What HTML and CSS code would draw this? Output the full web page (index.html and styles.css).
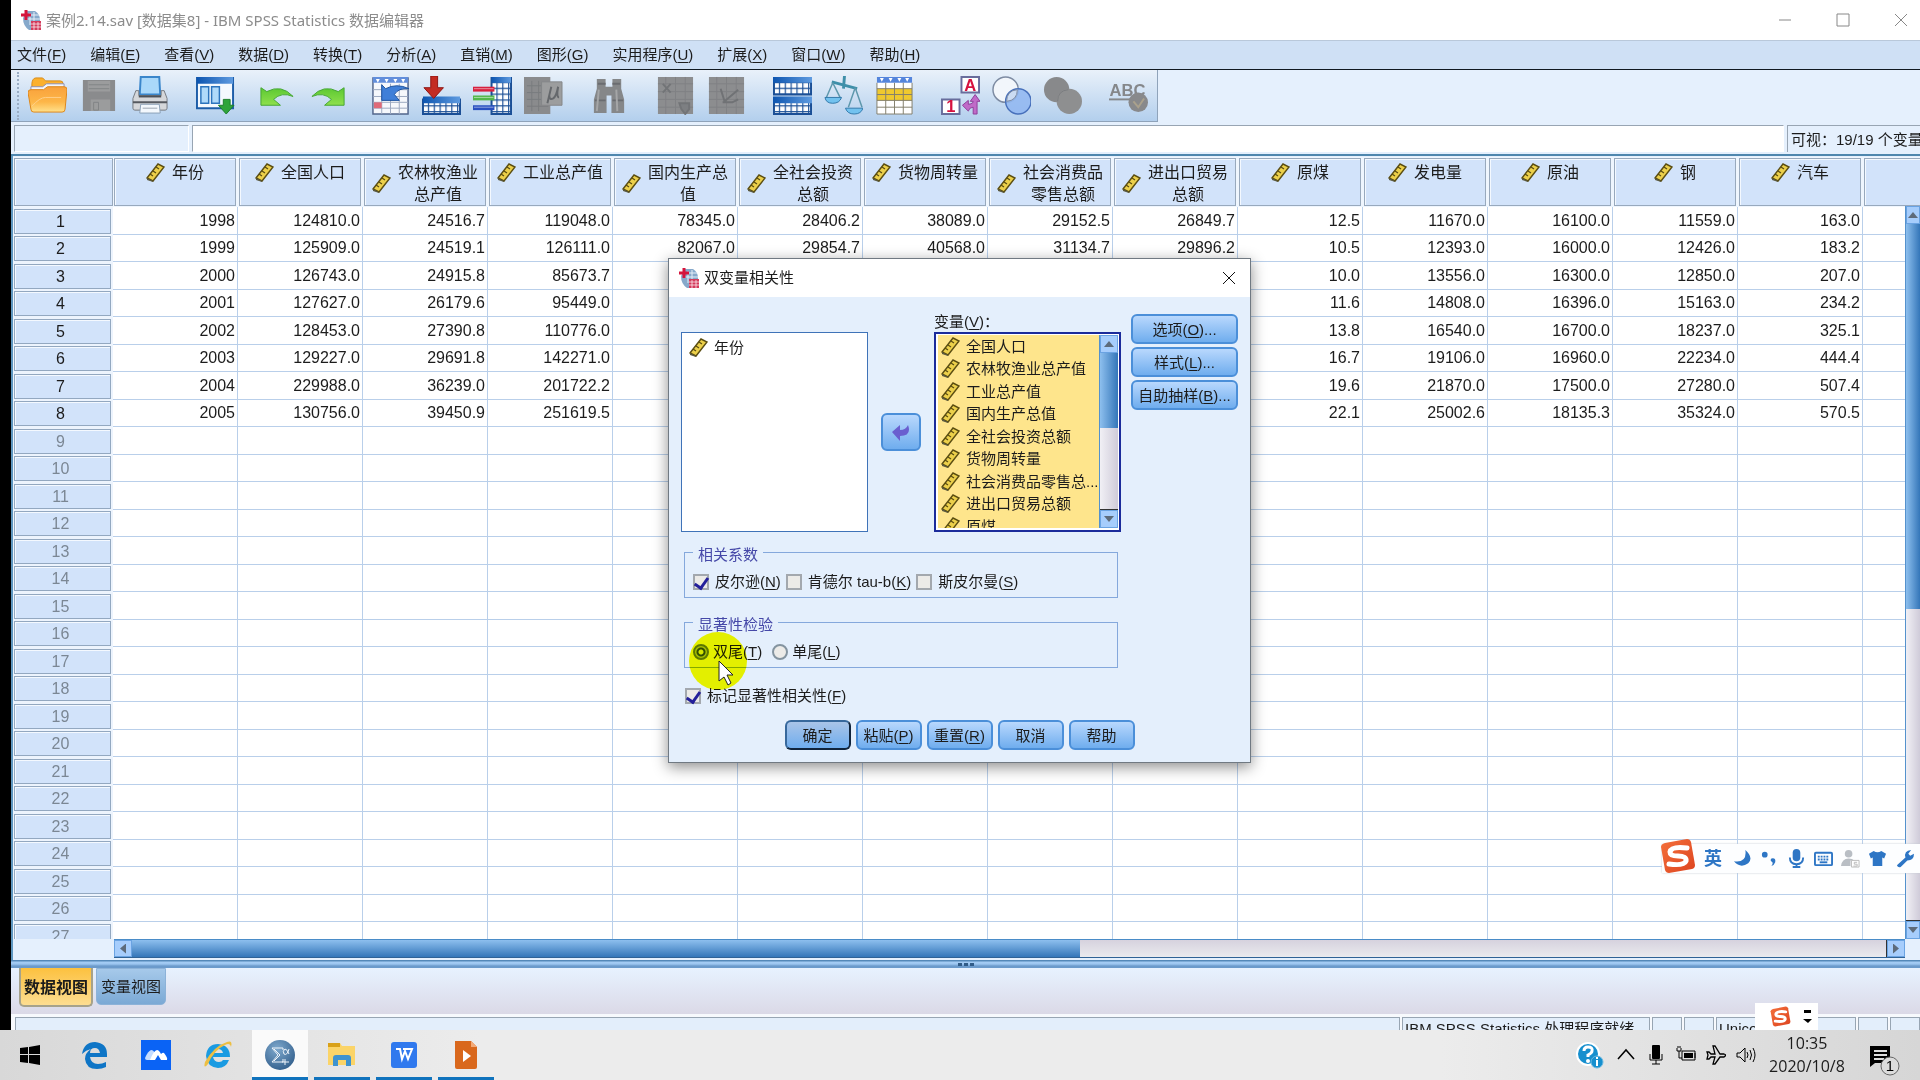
FILE: index.html
```html
<!DOCTYPE html>
<html lang="zh-CN">
<head>
    <meta charset="UTF-8">
    <meta name="viewport" content="width=device-width, initial-scale=1.0">
    <title>案例2.14.sav [数据集8] - IBM SPSS Statistics 数据编辑器</title>
    <link rel="stylesheet" href="styles.css">
</head>
<body>

    <!-- Shared icons -->
    <svg class="sprite" aria-hidden="true">
        <defs>
            <linearGradient id="blueHead" x1="0" y1="0" x2="1" y2="0"><stop offset="0" stop-color="#0d55b0"/><stop offset="1" stop-color="#5f9be0"/></linearGradient>
            <linearGradient id="orange" x1="0" y1="0" x2="0" y2="1"><stop offset="0" stop-color="#f9a13c"/><stop offset=".6" stop-color="#fdb648"/><stop offset="1" stop-color="#ffe18c"/></linearGradient>
            <linearGradient id="green" x1="0" y1="0" x2="0" y2="1"><stop offset="0" stop-color="#5cc832"/><stop offset="1" stop-color="#8fe04c"/></linearGradient>
            <linearGradient id="sogou" x1="0" y1="0" x2="1" y2="1"><stop offset="0" stop-color="#f4703a"/><stop offset="1" stop-color="#dd4420"/></linearGradient>
            <radialGradient id="ball" cx=".4" cy=".3" r=".8"><stop offset="0" stop-color="#7fa9cd"/><stop offset="1" stop-color="#2d5a88"/></radialGradient>
            <pattern id="blueGrid" width="6" height="6" patternUnits="userSpaceOnUse"><rect width="6" height="6" fill="#fff"/><path d="M0 0H6M0 0V6" stroke="#1b4f96" stroke-width="2.400"/></pattern>
        </defs>
        <symbol id="ruler" viewBox="0 0 20 20">
            <path d="M1 15 12 1l6 3L7 18z" fill="#ecd04a" stroke="#5b4e12" stroke-width="1.4"/>
            <path d="m4 11 3 2M7 8l3 2m0-6 3 2" stroke="#5b4e12" stroke-width="1.3"/>
            <path d="m1 15 6 3v1l-6-2z" fill="#5b5a40"/>
        </symbol>
        <symbol id="spss" viewBox="0 0 20 20">
            <path d="M6 1h8q5 3 5 9v10H8Q2 16 2 8z" fill="#86a9cb"/>
            <path d="M6 5h12M5 9h14M9 3v12M13 2v9" stroke="#e5eef8" stroke-width="1"/>
            <path d="M5 0v10M0 5h10" stroke="#d5143c" stroke-width="3"/>
            <rect x="10" y="11" width="10" height="9" fill="#d43a5b"/>
            <path d="M10 14h10M10 17h10M13 12v8m4-8v8" stroke="#fff" stroke-width=".7"/>
        </symbol>
        <symbol id="sogouLogo" viewBox="0 0 36 36">
            <path d="M5 5 27 1q3 0 4 3l4 23q0 3-3 4L9 35q-3 0-4-3L1 9q0-3 4-4z" fill="url(#sogou)"/>
            <path d="M27 10Q11 8 10 14q0 4 8 4 9 0 8 5-2 5-17 3" fill="none" stroke="#fff" stroke-width="5" stroke-linecap="round"/>
        </symbol>
    </svg>

    <main class="window">
        <header class="titlebar">
            <svg class="app-icon"><use href="#spss"/></svg>
            <h1>案例2.14.sav [数据集8] - IBM SPSS Statistics 数据编辑器</h1>
            <div class="window-buttons">
                <button aria-label="最小化"><svg viewBox="0 0 14 14"><path d="M1 7h12"/></svg></button>
                <button aria-label="最大化"><svg viewBox="0 0 14 14"><path d="M1 1h12v12H1z"/></svg></button>
                <button aria-label="关闭"><svg viewBox="0 0 14 14"><path d="m1 1 12 12M13 1 1 13"/></svg></button>
            </div>
        </header>

        <nav class="menubar">
            <button>文件(<u>F</u>)</button>
            <button>编辑(<u>E</u>)</button>
            <button>查看(<u>V</u>)</button>
            <button>数据(<u>D</u>)</button>
            <button>转换(<u>T</u>)</button>
            <button>分析(<u>A</u>)</button>
            <button>直销(<u>M</u>)</button>
            <button>图形(<u>G</u>)</button>
            <button>实用程序(<u>U</u>)</button>
            <button>扩展(<u>X</u>)</button>
            <button>窗口(<u>W</u>)</button>
            <button>帮助(<u>H</u>)</button>
        </nav>

        <div class="toolbar-row">
            <div class="toolbar">
                <div class="group">
                    <button aria-label="打开"><svg viewBox="0 0 40 40"><path d="M4 8q0-2 1-4 1-2 3-2h7l3 3h15q3 0 3 3v8H4z" fill="#fbb02e" stroke="#d98a14"/><path d="M3 11h12l4-3h18v10H3z" fill="#f4f6fa" stroke="#8d8fb0"/><path d="M0 17q0-3 3-3h13l4-3h17q3 0 3 3l-2 20q0 3-3 3H6q-3 0-3-3z" fill="url(#orange)" stroke="#dd8618"/><path d="M4 31q8-9 14-9h16" fill="none" stroke="#ffd08a"/></svg></button>
                    <button aria-label="保存" disabled><svg viewBox="0 0 40 40"><path d="M4 4h33v32H4z" fill="#8a8b8d"/><path d="M9 5h23v11H9zM12 24h20v12H12z" fill="#9b9c9d"/><path d="M10 9h21M10 13h21M15 27h5v8h-5z" stroke="#828486" fill="none"/></svg></button>
                    <button aria-label="打印"><svg viewBox="0 0 40 40"><path d="M11 1h19l1 18H10z" fill="#a9d8fa" stroke="#3a86cb" stroke-width="2"/><path d="M6 15h3v5h23v-5h3l3 8v10q0 2-2 2H5q-2 0-2-2V23z" fill="#d5d7da" stroke="#75797f"/><path d="M9 20h23v2H9z" fill="#4a5058"/><path d="M3 27h35" stroke="#55595f" stroke-width="2"/><path d="M11 29h19l1 9H10z" fill="#f3f8fd" stroke="#8a9fb6"/><path d="M13 33h15" stroke="#9aa4b0"/></svg></button>
                </div>
                <div class="group">
                    <button aria-label="重新调用对话框"><svg viewBox="0 0 40 40"><path d="M1 2h37v31H1z" fill="#f4f9fe" stroke="#1d5da8" stroke-width="2"/><path d="M1 1h37v7H1z" fill="url(#blueHead)"/><path d="M5 11h8v17H5zM16 11h8v17h-8z" fill="#b0dafa" stroke="#2c74bd" stroke-width="1.500"/><path d="M28 24h7v6h4l-8 9-8-9h5z" fill="#2fa43a" stroke="#1d7d2c"/></svg></button>
                </div>
                <div class="group tight">
                    <button aria-label="撤销"><svg viewBox="0 0 40 40"><path d="m3 12 6 4q15-8 27 5-12-5-20 3l7 6H3z" fill="url(#green)" stroke="#45a732"/></svg></button>
                    <button aria-label="重做"><svg viewBox="0 0 40 40"><path d="m36 12-6 4Q15 8 3 21q12-5 20 3l-7 6h20z" fill="url(#green)" stroke="#45a732"/></svg></button>
                </div>
                <div class="group tight">
                    <button aria-label="转到个案"><svg viewBox="0 0 40 40"><path d="M2 2h36v37H2z" fill="#f6f8fc" stroke="#52658c" stroke-width="1.500"/><path d="M2 1h36v6H2z" fill="#628edb"/><path d="m5 3 2 4 2-4m5 0 2 4 2-4m5 0 2 4 2-4m4 0 2 4 2-4" fill="#fff"/><path d="M2 14h36M2 21h36M2 27h36M2 33h36M11 8v31m9-31v31m9-31v31" stroke="#9ba8bf"/><path d="M3 27h8v6H3z" fill="#df6a78"/><path d="m11 9 4 4q11-6 24 0-11-1-15 6l5 6H11z" fill="#3f7fd8" stroke="#1d529e"/></svg></button>
                    <button aria-label="转到变量"><svg viewBox="0 0 40 40"><path d="M1 24h38v15H1z" fill="url(#blueGrid)" stroke="#1b4f96" stroke-width="2"/><path d="M1 21h38v7H1z" fill="url(#blueHead)"/><path d="M9 0h7v12h6L12 23 2 12h7z" fill="#c32b22" stroke="#8e1512"/></svg></button>
                    <button aria-label="变量"><svg viewBox="0 0 40 40"><path d="M19 2h20v37H19z" fill="url(#blueGrid)" stroke="#1b4f96" stroke-width="2"/><path d="M19 1h20v6H19z" fill="url(#blueHead)"/><path d="M0 11h22v5H0z" fill="#d7203f"/><path d="M0 20h22v5H0z" fill="#53b64b"/><path d="M0 30h22v5H0z" fill="#294fc0"/><path d="M1 13h20M1 22h20M1 32h20" stroke="#fff" stroke-opacity=".5"/></svg></button>
                    <button aria-label="运行描述统计" disabled><svg viewBox="0 0 40 40"><path d="M0 1h27v38H0z" fill="#8a8b8d"/><path d="M3 10h22M3 17h22M3 24h22M3 31h22M8 5v31m7-31v31" stroke="#797b7e"/><path d="M18 6h21v24H18z" fill="#9c9d9e" stroke="#858789"/><path d="m24 28 4-17m-2 9q0 5 4 3 3-2 5-12-2 11 1 11" stroke="#65686c" stroke-width="2" fill="none"/></svg></button>
                </div>
                <div class="group">
                    <button aria-label="查找" disabled><svg viewBox="0 0 40 40"><path d="M7 3h9v8h7V3h9v10l3 11v14H22V20h-5v18H4V24l3-11z" fill="#858789"/><path d="M8 8h8m7 0h8M5 25h11m7 0h11" stroke="#6a6c70" stroke-width="2"/><path d="M9 14 7 36m20-22 1 22" stroke="#a5a6a7" stroke-width="2"/></svg></button>
                </div>
                <div class="group">
                    <button aria-label="插入个案" disabled><svg viewBox="0 0 40 40"><path d="M2 1h36v38H2z" fill="#8c8d8f"/><path d="M2 8h36M2 16h36M2 24h36M2 32h36M10 1v38m10-38v38m10-38v38" stroke="#7f8184"/><path d="m7 8 8 9m0-9-8 9M24 28h10v6l-4 5-4-5z" stroke="#727477" stroke-width="2" fill="#7d7f82"/></svg></button>
                    <button aria-label="插入变量" disabled><svg viewBox="0 0 40 40"><path d="M2 1h36v38H2z" fill="#8c8d8f"/><path d="M2 8h36M2 16h36M2 24h36M2 32h36M10 1v38m10-38v38m10-38v38" stroke="#7f8184"/><path d="m14 13 4 13 14-12M16 27h10l6-3" stroke="#707275" stroke-width="2" fill="none"/></svg></button>
                </div>
                <div class="group">
                    <button aria-label="拆分文件"><svg viewBox="0 0 40 40"><path d="M1 6h38v13H1zM1 26h38v13H1z" fill="url(#blueGrid)" stroke="#1b4f96" stroke-width="2"/><path d="M0 1h40v6H0zM0 21h40v7H0z" fill="url(#blueHead)"/></svg></button>
                    <button aria-label="个案加权"><svg viewBox="0 0 40 40"><path d="m8 6 26 7M21 0l-1 13" stroke="#3e8fa9" stroke-width="3"/><path d="M9 7 2 23m7-16 8 16M32 12l-7 20m7-20 7 20" stroke="#5d97ac" stroke-width="1.500"/><path d="M1 22h17q-2 6-9 6t-8-6zM22 33h18q-2 6-9 6t-9-6z" fill="#72c2ef" stroke="#3278aa"/></svg></button>
                    <button aria-label="选择个案"><svg viewBox="0 0 40 40"><path d="M2 2h36v37H2z" fill="#fff"/><path d="M2 1h36v6H2z" fill="#5485dc"/><path d="m5 2 2 4 2-4m5 0 2 4 2-4m5 0 2 4 2-4m4 0 2 4 2-4" fill="#fff"/><path d="M2 13h36v12H2z" fill="#efc92e"/><path d="M2 7v32h36V7M2 13h36M2 19h36M2 25h36M2 32h36M11 7v32m9-32v32m9-32v32" stroke="#837e6c" fill="none"/></svg></button>
                </div>
                <div class="group">
                    <button aria-label="值标签"><svg viewBox="0 0 40 40"><path d="M21 1h18v16H21zM1 24h18v15H1z" fill="#fff" stroke="#686d9c" stroke-width="2"/><text class="glyph" x="30" y="15">A</text><text class="glyph" x="10" y="37">1</text><path d="m35 19 5 7h-3v13h-4v-7q-4 0-5 4l-6-6 6-5v4q3 0 5-2v-1h-3z" fill="#c06ac8" stroke="#8e3f99"/></svg></button>
                    <button aria-label="使用变量集"><svg viewBox="0 0 40 40"><circle cx="14" cy="14" r="13" fill="#f2f6fb" stroke="#7d8ba2" stroke-width="1.500"/><circle cx="27" cy="26" r="13" fill="#8fb6f1" fill-opacity=".85" stroke="#4770bb" stroke-width="1.500"/><path d="M15 26q0-11 11-12 0 11-11 12z" fill="#cbdcf3" stroke="#7d8ba2"/></svg></button>
                    <button aria-label="显示所有变量" disabled><svg viewBox="0 0 40 40"><circle cx="14" cy="14" r="13" fill="#88898b"/><circle cx="27" cy="26" r="13" fill="#8e8f90"/><path d="M15 26q0-11 11-12" stroke="#7a7c7f" fill="none"/></svg></button>
                </div>
                <div class="group">
                    <button aria-label="拼写检查" disabled><svg viewBox="0 0 40 40"><text class="glyph abc" x="19" y="20">ABC</text><path d="M0 24h22" stroke="#85888c" stroke-width="2"/><circle cx="30" cy="27" r="10" fill="#88898b"/><path d="m25 26 5 6 6-9" fill="none" stroke="#aaa18c" stroke-width="2"/></svg></button>
                </div>
            </div>
        </div>

        <div class="cell-editor">
            <input class="cell-name" aria-label="单元格" readonly>
            <input class="cell-value" aria-label="单元格内容">
            <div class="visible-count">可视：19/19 个变量</div>
        </div>

        <section class="data-view">
            <div class="grid-area">
                <table class="data-table">
                    <thead><tr id="columnHeads"><th class="corner"><div></div></th></tr></thead>
                    <tbody id="rows"></tbody>
                </table>
                <div class="vscroll">
                    <span class="arrow up"></span>
                    <span class="thumb"></span>
                    <span class="track"></span>
                    <span class="arrow down"></span>
                </div>
            </div>
            <div class="hscroll-row">
                <div class="hscroll">
                    <span class="arrow left"></span>
                    <span class="thumb"></span>
                    <span class="track"></span>
                    <span class="arrow right"></span>
                </div>
            </div>
        </section>

        <div class="splitter"><i></i><i></i><i></i></div>

        <div class="view-tabs">
            <button class="tab active">数据视图</button>
            <button class="tab">变量视图</button>
        </div>

        <footer class="statusbar">
            <div class="status-main"></div>
            <div class="status-processor">IBM SPSS Statistics 处理程序就绪</div>
            <div class="status-small"></div>
            <div class="status-small"></div>
            <div class="status-unicode">Unicode:ON</div>
            <div class="status-small"></div>
            <div class="status-small"></div>
        </footer>
    </main>

    <footer class="taskbar">
        <button class="task start" aria-label="开始"><svg viewBox="0 0 20 20"><path d="m0 3 8-1v7H0zm9-1 11-2v9H9zM0 10h8v8l-8-1zm9 0h11v10L9 18z" fill="#000"/></svg></button>
        <button class="task" aria-label="Edge"><svg viewBox="0 0 30 30"><path d="M3 14Q5 2 16 2q12 1 12 12v3H11q1 7 8 7 4 0 8-2v5q-4 2-9 2Q7 29 6 19q0-6 6-10-5 1-9 5zm8-1h10q-1-5-5-5-5 0-5 5z" fill="#0e75c6"/></svg></button>
        <button class="task" aria-label="腾讯会议"><svg viewBox="0 0 30 30"><path d="M0 0h30v30H0z" fill="#0a63f5"/><path d="M4 18q3-7 6-8 3 0 4 4l-3 6H6q-2 0-2-2z" fill="#c5dcff"/><path d="M9 20q4-10 7-10 2 0 4 4 2-2 3-1 4 5 3 7h-6l-3-5-3 5H9z" fill="#fff"/></svg></button>
        <button class="task" aria-label="Internet Explorer"><svg viewBox="0 0 30 30"><path d="M3 16Q4 4 15 4q12 1 12 13H10q1 5 6 5 3 0 4-2h6q-3 8-11 8Q4 27 3 16zm7-3h10q-1-4-5-4t-5 4z" fill="#1a9be2"/><path d="M5 24q-5 6-3-2Q11 6 24 2q6-2 4 5-1-5-6-2Q11 10 5 24z" fill="#edbf42"/></svg></button>
        <button class="task running current" aria-label="SPSS"><svg viewBox="0 0 30 30"><circle cx="15" cy="15" r="15" fill="url(#ball)"/><path d="M18 10V8H7l6 7-6 7h11v-3m-9 2 6-6-6-6" fill="none" stroke="#eef4fa"/><path d="M24 9q-2 7-5 5-2-3 1-5 2 0 4 5M17 22h7m-4-3v6" fill="none" stroke="#eef4fa"/></svg></button>
        <button class="task running" aria-label="文件资源管理器"><svg viewBox="0 0 30 30"><path d="M1 3h12l2 3h13v19H1z" fill="#fbd468"/><path d="M1 3h12v4H1z" fill="#d9a119"/><path d="M6 26V18q0-3 3-3h12q3 0 3 3v8h-5v-6h-8v6z" fill="#3f93cf"/></svg></button>
        <button class="task running" aria-label="WPS"><svg viewBox="0 0 30 30"><rect x="2" y="2" width="26" height="26" rx="3" fill="#3079ee"/><path d="M7 9h4l2 10 3-8 3 8 4-10H14" fill="none" stroke="#fff" stroke-width="2"/></svg></button>
        <button class="task running" aria-label="播放器"><svg viewBox="0 0 30 30"><path d="M4 1h16l6 6v20q0 2-2 2H6q-2 0-2-2z" fill="#d9681d"/><path d="M20 1v6h6z" fill="#f3aa78"/><path d="m12 10 8 6-8 6z" fill="#fff"/></svg></button>

        <div class="tray">
            <svg class="help" viewBox="0 0 28 28"><circle cx="12" cy="13" r="11" fill="#168fce" stroke="#fff" stroke-width="2"/><path d="M8 10q0-4 4-4 5 0 4 4 0 2-4 4v2" fill="none" stroke="#fff" stroke-width="3"/><circle cx="12" cy="20" r="2" fill="#fff"/><circle cx="21" cy="21" r="6" fill="#168fce" stroke="#6bb9e2"/><path d="M21 19v6m0-9v2" stroke="#fff" stroke-width="2"/></svg>
            <svg viewBox="0 0 20 20"><path d="m2 14 8-9 8 9" fill="none" stroke="#000" stroke-width="1.500"/></svg>
            <svg viewBox="0 0 20 20"><rect x="6" y="0" width="8" height="14" rx="1"/><path d="M4 9v6h12V9m-6 6v4m-4 0h8" fill="none" stroke="#000"/></svg>
            <svg viewBox="0 0 20 20"><path d="M6 6h13v9H6zM19 8v5M1 3v3h4V3M2 1v2m2-2v2M3 6v7h3" fill="none" stroke="#000"/><path d="M8 8h9v5H8z"/></svg>
            <svg viewBox="0 0 20 20"><path d="M1 7h2l2 2h4L7 1h2l5 8h4q3 1 0 3h-4l-5 7H7l2-7H5l-2 2H1l1-4z" fill="none" stroke="#000" stroke-width="1.300"/></svg>
            <svg viewBox="0 0 20 20"><path d="M1 8h3l5-5v14l-5-5H1zM11 7q2 3 0 6m3-8q3 5 0 10m3-12q4 7 0 14" fill="none" stroke="#000"/></svg>
            <div class="clock"><time>10:35</time><span>2020/10/8</span></div>
            <svg class="notice" viewBox="0 0 30 32"><path d="M0 2h20v17H5l-5 4z"/><path d="M4 7h13M4 11h13M4 15h10" stroke="#ddd" stroke-width="2"/><circle cx="20" cy="22" r="9" fill="#dcdcdc" stroke="#666"/><text x="20" y="27">1</text></svg>
        </div>
    </footer>

    <!-- 双变量相关性 -->
    <section class="dialog" role="dialog" aria-labelledby="dialogTitle">
        <header class="dialog-title">
            <svg class="app-icon"><use href="#spss"/></svg>
            <h2 id="dialogTitle">双变量相关性</h2>
            <button aria-label="关闭"><svg viewBox="0 0 14 14"><path d="m1 1 12 12M13 1 1 13"/></svg></button>
        </header>
        <form class="dialog-body">
            <div class="pickers">
                <ul class="listbox source" role="listbox" aria-label="可用变量">
                    <li><svg><use href="#ruler"/></svg>年份</li>
                </ul>
                <div class="mover">
                    <button type="button" aria-label="移动"><svg viewBox="0 0 20 20"><path d="M1 9 9 2v5q6 0 8-5 4 11-8 11v5z" fill="#6a5fcf"/></svg></button>
                </div>
                <div class="target-column">
                    <div class="list-label" id="targetLabel">变量(<u>V</u>)：</div>
                    <div class="listbox target">
                        <ul role="listbox" aria-labelledby="targetLabel">
                            <li><svg><use href="#ruler"/></svg>全国人口</li>
                            <li><svg><use href="#ruler"/></svg>农林牧渔业总产值</li>
                            <li><svg><use href="#ruler"/></svg>工业总产值</li>
                            <li><svg><use href="#ruler"/></svg>国内生产总值</li>
                            <li><svg><use href="#ruler"/></svg>全社会投资总额</li>
                            <li><svg><use href="#ruler"/></svg>货物周转量</li>
                            <li><svg><use href="#ruler"/></svg>社会消费品零售总...</li>
                            <li><svg><use href="#ruler"/></svg>进出口贸易总额</li>
                            <li><svg><use href="#ruler"/></svg>原煤</li>
                        </ul>
                        <div class="vscroll">
                            <span class="arrow up"></span>
                            <span class="thumb"></span>
                            <span class="track"></span>
                            <span class="arrow down"></span>
                        </div>
                    </div>
                </div>
                <div class="side-buttons">
                    <button type="button">选项(<u>O</u>)...</button>
                    <button type="button">样式(<u>L</u>)...</button>
                    <button type="button">自助抽样(<u>B</u>)...</button>
                </div>
            </div>

            <fieldset>
                <legend>相关系数</legend>
                <div class="choices">
                    <label><input type="checkbox" checked><span>皮尔逊(<u>N</u>)</span></label>
                    <label><input type="checkbox"><span>肯德尔 tau-b(<u>K</u>)</span></label>
                    <label><input type="checkbox"><span>斯皮尔曼(<u>S</u>)</span></label>
                </div>
            </fieldset>

            <fieldset>
                <legend>显著性检验</legend>
                <div class="choices radios">
                    <label><input type="radio" name="tails" checked><span>双尾(<u>T</u>)</span></label>
                    <label><input type="radio" name="tails"><span>单尾(<u>L</u>)</span></label>
                </div>
            </fieldset>

            <label class="flag"><input type="checkbox" checked><span>标记显著性相关性(<u>F</u>)</span></label>

            <div class="actions">
                <button type="button" class="default">确定</button>
                <button type="button">粘贴(<u>P</u>)</button>
                <button type="button">重置(<u>R</u>)</button>
                <button type="button">取消</button>
                <button type="button">帮助</button>
            </div>
        </form>
        <div class="click-spot"></div>
        <svg class="pointer" viewBox="0 0 16 26"><path d="M1 1v20l5-4 4 8 3-2-4-8h6z" fill="#fff" stroke="#222"/></svg>
    </section>

    <!-- Input method toolbar -->
    <div class="ime-bar">
        <svg class="ime-logo"><use href="#sogouLogo"/></svg>
        <button class="lang">英</button>
        <button aria-label="半角"><svg viewBox="0 0 20 20"><path d="M13 1q9 8 3 14-8 6-15-2 14 2 12-12z"/></svg></button>
        <button aria-label="标点"><svg viewBox="0 0 20 20"><circle cx="5" cy="6" r="3"/><path d="M12 10q5-1 4 4-1 3-4 4 2-3 1-4-3-2-1-4z"/></svg></button>
        <button aria-label="语音"><svg viewBox="0 0 20 20"><rect x="6" y="0" width="8" height="13" rx="4"/><path d="M3 9q0 7 7 7t7-7m-7 7v3m-4 0h8" fill="none" stroke="#2e76c5" stroke-width="2"/></svg></button>
        <button aria-label="软键盘"><svg viewBox="0 0 20 20"><rect x="1" y="4" width="18" height="13" rx="1" fill="none" stroke="#2e76c5" stroke-width="2"/><path d="M4 8h12M4 11h12" stroke="#2e76c5" stroke-width="2" stroke-dasharray="2 1"/><path d="M6 14h8" stroke="#2e76c5" stroke-width="2"/></svg></button>
        <button aria-label="用户"><svg class="muted" viewBox="0 0 20 20"><circle cx="8" cy="5" r="4"/><path d="M0 18q1-8 8-8 4 0 6 2h-4v6z"/><path d="M11 12h8v7h-8zM17 14h-3v2h3v2h-4" fill="#fff" stroke="#bbb"/></svg></button>
        <button aria-label="皮肤"><svg viewBox="0 0 20 20"><path d="M6 2q4 3 8 0l5 3-2 5-2-1v9H5V9l-2 1-2-5z"/></svg></button>
        <button aria-label="工具"><svg viewBox="0 0 20 20"><path d="M11 9q-2-7 6-8l-3 4 2 2 4-2q0 7-7 7l-7 7q-3 1-4-2z"/></svg></button>
    </div>

    <div class="ime-float">
        <svg class="ime-logo"><use href="#sogouLogo"/></svg>
        <svg class="ime-more" viewBox="0 0 10 14"><path d="M1 0h7v3H1zM0 9h9l-4 4z"/></svg>
    </div>

    <script>
        const columns = ['年份', '全国人口', '农林牧渔业总产值', '工业总产值', '国内生产总值', '全社会投资总额', '货物周转量',
            '社会消费品零售总额', '进出口贸易总额', '原煤', '发电量', '原油', '钢', '汽车', ''];

        const data = [
            ['1998', '124810.0', '24516.7', '119048.0', '78345.0', '28406.2', '38089.0', '29152.5', '26849.7', '12.5', '11670.0', '16100.0', '11559.0', '163.0'],
            ['1999', '125909.0', '24519.1', '126111.0', '82067.0', '29854.7', '40568.0', '31134.7', '29896.2', '10.5', '12393.0', '16000.0', '12426.0', '183.2'],
            ['2000', '126743.0', '24915.8', '85673.7', '', '', '', '', '', '10.0', '13556.0', '16300.0', '12850.0', '207.0'],
            ['2001', '127627.0', '26179.6', '95449.0', '', '', '', '', '', '11.6', '14808.0', '16396.0', '15163.0', '234.2'],
            ['2002', '128453.0', '27390.8', '110776.0', '', '', '', '', '', '13.8', '16540.0', '16700.0', '18237.0', '325.1'],
            ['2003', '129227.0', '29691.8', '142271.0', '', '', '', '', '', '16.7', '19106.0', '16960.0', '22234.0', '444.4'],
            ['2004', '229988.0', '36239.0', '201722.2', '', '', '', '', '', '19.6', '21870.0', '17500.0', '27280.0', '507.4'],
            ['2005', '130756.0', '39450.9', '251619.5', '', '', '', '', '', '22.1', '25002.6', '18135.3', '35324.0', '570.5']
        ];

        const heads = document.getElementById('columnHeads');
        columns.forEach(function(name) {
            const label = name ? '<svg><use href="#ruler"/></svg><span>' + name + '</span>' : '';
            heads.insertAdjacentHTML('beforeend', '<th scope="col"><div><p>' + label + '</p></div></th>');
        });

        const rows = document.getElementById('rows');
        for (let i = 0; i < 27; i++) {
            const values = data[i] || [];
            let html = '<tr class="' + (data[i] ? 'filled' : 'empty') + '"><th scope="row"><div>' + (i + 1) + '</div></th>';
            for (let j = 0; j < columns.length; j++) {
                html += '<td>' + (values[j] || '') + '</td>';
            }
            rows.insertAdjacentHTML('beforeend', html + '</tr>');
        }
    </script>

</body>
</html>
```

FILE: styles.css
```css
* {
    box-sizing: border-box;
}

body {
    margin: 0;
    height: 100vh;
    display: flex;
    flex-direction: column;
    position: relative;
    overflow: hidden;
    background: #000;
    color: #1c1c1c;
    font-family: "Liberation Sans", "Noto Sans CJK SC", sans-serif;
    font-size: 15px;
    line-height: 20px;
}

button, input {
    font: inherit;
    color: inherit;
}

button {
    padding: 0;
    border: 0;
    background: none;
    white-space: nowrap;
}

u {
    text-underline-offset: 2px;
}

h1, h2 {
    margin: 0;
    font-size: 15px;
    font-weight: normal;
}

.sprite {
    position: absolute;
    width: 0;
    height: 0;
}

.window {
    flex: 1;
    min-height: 0;
    margin-left: 11px;
    display: flex;
    flex-direction: column;
    overflow: hidden;
    background: #e5f0fd;
}

/* Title bar */
.titlebar {
    height: 40px;
    flex: none;
    display: flex;
    align-items: center;
    padding-left: 10px;
    background: #fff;
}

.titlebar h1 {
    flex: 1;
    margin-left: 5px;
    color: #8c8c8c;
    font-family: "Noto Sans", "Noto Sans CJK SC", sans-serif;
}

.app-icon {
    width: 20px;
    height: 20px;
}

.window-buttons {
    display: flex;
}

.window-buttons button {
    width: 58px;
    height: 40px;
    padding-top: 4px;
}

.window-buttons button:last-child {
    width: 38px;
    margin-left: 10px;
}

.window-buttons svg, .dialog-title button svg {
    width: 14px;
    height: 14px;
    fill: none;
    stroke: #888;
}

.menubar {
    height: 30px;
    flex: none;
    display: flex;
    align-items: center;
    gap: 24px;
    padding-left: 6px;
    background: #cfe0f5;
    border-top: 1px solid #b9c8da;
    border-bottom: 1px solid #101820;
}

.toolbar-row {
    height: 55px;
    flex: none;
    display: flex;
    align-items: flex-start;
}

.toolbar {
    height: 52px;
    display: flex;
    align-items: center;
    gap: 0 15px;
    padding: 0 3px 0 6px;
    background: linear-gradient(#e9f1fa, #b3cfed);
    border-right: 1px solid #8fa3ba;
    border-bottom: 1px solid #8fa3ba;
}

.toolbar::before {
    content: "";
    width: 0;
    height: 48px;
    margin-right: -12px;
    border-left: 2px dotted #9aadc4;
}

.group {
    display: flex;
}

.group.tight {
    margin-left: -4px;
}

.group button {
    width: 51px;
    height: 48px;
}

.group svg {
    display: block;
    width: 39px;
    height: 39px;
    margin: 0 auto;
}

.glyph {
    font-size: 17px;
    font-weight: bold;
    fill: #d6123f;
    text-anchor: middle;
}

.glyph.abc {
    font-size: 17px;
    fill: #85878a;
}

/* Cell editor */
.cell-editor {
    height: 31px;
    flex: none;
    display: flex;
    gap: 3px;
    padding: 0 0 2px 3px;
    border-bottom: 2px solid #4f87ae;
}

.cell-editor input {
    min-width: 0;
    border: 1px solid #98a5b3;
    border-right-color: #fff;
    border-bottom-color: #fff;
}

.cell-name {
    width: 175px;
    background: #e5f0fd;
}

.cell-value {
    flex: 1;
    background: #fff;
}

.visible-count {
    width: 133px;
    padding: 4px 0 0 3px;
    overflow: hidden;
    white-space: nowrap;
    border-top: 1px solid #98a5b3;
    border-left: 1px solid #98a5b3;
}

/* Data grid */
.data-view {
    flex: 1;
    min-height: 0;
    display: flex;
    flex-direction: column;
    border-left: 2px solid #5f97c0;
}

.grid-area {
    flex: 1;
    min-height: 0;
    display: flex;
    overflow: hidden;
    padding-top: 1px;
}

.data-table {
    width: 1975px;
    flex: none;
    align-self: flex-start;
    margin-right: -83px;
    table-layout: fixed;
    border-collapse: separate;
    border-spacing: 0;
    background: #fff;
}

.data-table th, .data-table td {
    padding: 0;
    font-weight: normal;
}

.data-table thead th {
    width: 125px;
    height: 50px;
    padding: 1px 2px 1px 1px;
    background: #eff6fe;
}

.data-table thead th.corner {
    width: 100px;
    padding: 1px 0 1px 1px;
}

.data-table thead th div {
    height: 48px;
    padding-top: 3px;
    font-size: 16px;
    line-height: 22px;
    background: #d2e3fa;
    border: 1px solid #98a9bd;
    box-shadow: inset 1px 1px #f4f9ff;
}

.data-table thead p {
    display: flex;
    justify-content: center;
    align-items: center;
    gap: 6px;
    margin: 0;
}

.data-table thead span {
    max-width: 80px;
}

.data-table thead svg {
    width: 20px;
    height: 20px;
    flex: none;
}

.data-table tbody tr {
    height: 28px;
}

.data-table tbody tr:nth-child(even) {
    height: 27px;
}

.data-table tbody th {
    padding: 0 2px 0 1px;
    font-size: 16px;
    background: #edf4fd;
}

.data-table tbody th div {
    height: 25px;
    padding-right: 4px;
    line-height: 24px;
    background: #d2e3fa;
    border: 1px solid #93a8c0;
    box-shadow: inset 1px 1px #f4f9ff;
}

.data-table .empty th {
    color: #7b8794;
}

.data-table td {
    padding-right: 2px;
    font-size: 16px;
    text-align: right;
    border-right: 1px solid #b9cfea;
    border-bottom: 1px solid #b9cfea;
}

/* Scrollbars */
.vscroll, .hscroll {
    display: flex;
    background: #e2e0e8;
}

.vscroll {
    position: relative;
    width: 15px;
    flex: none;
    flex-direction: column;
    border-left: 1px solid #5592cd;
}

.grid-area .vscroll {
    margin-top: 49px;
}

.vscroll .thumb {
    flex: 384;
    background: linear-gradient(90deg, #8dbfee, #3476b9);
}

.vscroll .track {
    flex: 311;
    background: linear-gradient(90deg, #f1f0f5, #cfcbd9);
    border-bottom: 1px solid #333;
}

.arrow {
    flex: none;
    display: flex;
    align-items: center;
    justify-content: center;
    background: #a6cdfc;
    border: 1px solid #6aa3e2;
}

.vscroll .arrow {
    height: 18px;
}

.hscroll .arrow {
    width: 18px;
}

.arrow::before {
    content: "";
    width: 10px;
    height: 6px;
    background: #5d6b7b;
}

.arrow.up::before {
    clip-path: polygon(50% 0, 100% 100%, 0 100%);
}

.arrow.down::before {
    clip-path: polygon(0 0, 100% 0, 50% 100%);
}

.arrow.left::before {
    width: 6px;
    height: 10px;
    clip-path: polygon(100% 0, 100% 100%, 0 50%);
}

.arrow.right::before {
    width: 6px;
    height: 10px;
    clip-path: polygon(0 0, 100% 50%, 0 100%);
}

.hscroll-row {
    flex: none;
    padding: 0 15px 2px 101px;
}

.hscroll {
    height: 19px;
    border-top: 1px solid #4a8cc8;
    border-bottom: 1px solid #2f6296;
}

.hscroll .thumb {
    flex: 947;
    background: linear-gradient(#8dbfee, #3476b9);
}

.hscroll .track {
    flex: 806;
    background: linear-gradient(#d6d2de, #eaeaee);
    border-right: 1px solid #333;
}

.splitter {
    height: 8px;
    flex: none;
    display: flex;
    align-items: center;
    justify-content: center;
    gap: 2px;
    background: linear-gradient(#5488b8 0, #5488b8 1px, #a5cdf5 2px, #9cc5f0 4px, #6b9acb 6px, #6b9acb);
}

.splitter i {
    width: 4px;
    height: 3px;
    background: #315c88;
}

/* Tabs and status */
.view-tabs {
    height: 46px;
    flex: none;
    display: flex;
    align-items: flex-start;
    gap: 3px;
    padding-left: 8px;
    background: linear-gradient(#e7f2ff, #dbd9e7);
}

.tab {
    width: 70px;
    height: 37px;
    background: linear-gradient(#a6c9ea, #7ba9d5);
    border: 1px solid #8cb2d8;
    border-radius: 0 0 5px 5px;
}

.tab.active {
    width: 74px;
    height: 39px;
    padding-top: 3px;
    font-size: 16px;
    font-weight: bold;
    background: linear-gradient(#fcc13f, #fddd91);
    border: 2px solid #a6a28b;
    border-top: 0;
}

.statusbar {
    height: 16px;
    flex: none;
    display: flex;
    gap: 2px;
    padding: 3px 0 0 4px;
    overflow: hidden;
    background: #f7f9fd;
}

.statusbar div {
    height: 26px;
    padding: 1px 2px;
    white-space: nowrap;
    background: #e3eefb;
    border: 1px solid #98a5b3;
}

.statusbar .status-main {
    flex: 1;
}

.status-processor {
    width: 248px;
}

.status-small {
    width: 30px;
}

.status-unicode {
    width: 140px;
}

/* Taskbar */
.taskbar {
    height: 50px;
    flex: none;
    display: flex;
    background: linear-gradient(90deg, #d8d8d8, #ececec 25%, #ececec 75%, #d6d6d6);
}

.task {
    width: 56px;
    height: 50px;
    margin-right: 6px;
    border-bottom: 3px solid transparent;
}

.task svg {
    display: block;
    width: 30px;
    height: 30px;
    margin: 3px auto 0;
}

.task.start {
    width: 60px;
}

.task.start svg {
    width: 20px;
    height: 20px;
}

.task.running {
    border-bottom-color: #1073bd;
}

.task.current {
    background: #fafafa;
}

.tray {
    display: flex;
    align-items: center;
    gap: 10px;
    margin-left: auto;
    padding-right: 20px;
}

.tray svg {
    width: 20px;
    height: 20px;
}

.tray .help {
    width: 28px;
    height: 28px;
    margin-right: 2px;
}

.tray .notice {
    width: 30px;
    height: 32px;
    margin-top: 10px;
}

.tray .notice text {
    font-size: 15px;
    text-anchor: middle;
}

.clock {
    width: 82px;
    margin-right: 12px;
    display: flex;
    flex-direction: column;
    align-items: center;
    font-family: "Open Sans", sans-serif;
    font-size: 16px;
    line-height: 23px;
}

/* Dialog */
.dialog {
    position: absolute;
    left: 668px;
    top: 258px;
    width: 583px;
    background: #e4effc;
    border: 1px solid #707982;
    box-shadow: 0 4px 14px rgba(0, 0, 0, 0.45);
}

.dialog-title {
    height: 38px;
    display: flex;
    align-items: center;
    padding: 0 9px 0 10px;
    background: #fff;
}

.dialog-title h2 {
    flex: 1;
    margin-left: 5px;
}

.dialog-title button {
    width: 24px;
    height: 24px;
}

.dialog-title button svg {
    display: block;
    margin: 0 auto;
    stroke: #111;
}

.dialog-body {
    padding: 17px 12px 12px;
}

.dialog-body button {
    height: 30px;
    padding-top: 2px;
    background: linear-gradient(#b9d8fd, #6fadee);
    border: 2px solid #4b8fd9;
    border-radius: 6px;
}

.pickers {
    display: flex;
    align-items: flex-end;
}

.listbox {
    width: 187px;
    height: 200px;
    margin: 0;
    list-style: none;
    background: #fff;
    border: 1px solid #3f73b8;
    overflow: hidden;
}

.listbox.source {
    padding: 3px 7px;
}

.listbox.target {
    display: flex;
    padding: 1px 1px 2px 2px;
    border: 2px solid #1b2b9b;
}

.listbox ul {
    flex: 1;
    min-width: 0;
    margin: 0;
    padding: 0 0 0 3px;
    overflow: hidden;
    list-style: none;
    background: #fee58c;
}

.listbox li {
    display: flex;
    align-items: center;
    gap: 5px;
    height: 23px;
    white-space: nowrap;
}

.listbox li:nth-child(even) {
    height: 22px;
}

.listbox li svg {
    width: 20px;
    height: 20px;
    flex: none;
}

.listbox .vscroll {
    width: 19px;
}

.listbox .vscroll .thumb {
    flex: 77;
}

.listbox .vscroll .track {
    flex: 83;
}

.mover {
    height: 200px;
    display: flex;
    align-items: center;
    padding: 0 13px;
}

.mover button {
    width: 40px;
    height: 38px;
}

.mover svg {
    display: block;
    width: 20px;
    height: 20px;
    margin: 0 auto;
}

.list-label {
    height: 18px;
    line-height: 16px;
}

.side-buttons {
    width: 107px;
    margin-left: 10px;
    align-self: flex-start;
    display: flex;
    flex-direction: column;
    gap: 3px;
}

fieldset {
    width: 434px;
    margin: 10px 0 0 3px;
    padding: 10px 8px 5px;
    border: 1px solid #84a8dc;
}

fieldset + fieldset {
    margin-top: 14px;
}

legend {
    height: 20px;
    padding: 0 5px;
    line-height: 25px;
    color: #4548a8;
}

.choices {
    display: flex;
    gap: 5px;
    white-space: nowrap;
}

.choices.radios {
    gap: 10px;
}

label {
    display: flex;
    align-items: center;
    gap: 6px;
}

.radios label {
    gap: 4px;
}

input[type="checkbox"], input[type="radio"] {
    appearance: none;
    width: 16px;
    height: 16px;
    margin: 0;
    background: #ecebe8;
    border: 2px solid #a3a8ae;
}

input[type="checkbox"] {
    display: flex;
    justify-content: center;
}

input[type="checkbox"]:checked::before {
    content: "";
    width: 6px;
    height: 11px;
    margin-top: -1px;
    border: solid #24209a;
    border-width: 0 3px 3px 0;
    transform: rotate(35deg);
}

input[type="radio"] {
    border-color: #8494a0;
    border-radius: 50%;
}

input[type="radio"]:checked {
    background: radial-gradient(circle, #d7e6d8 0, #d7e6d8 2px, #2f4d5e 3px, #2f4d5e 4px, #a9c08f 5px);
    border-color: #5d7883;
}

.flag {
    margin: 18px 0 0 4px;
}

.actions {
    display: flex;
    justify-content: center;
    gap: 5px;
    margin-top: 14px;
}

.actions button {
    width: 66px;
}

.actions .default {
    background: linear-gradient(#a9c4e8, #6fadee);
    border-color: #37689c #10243c #10243c #37689c;
}

.click-spot {
    position: absolute;
    left: 20px;
    top: 373px;
    width: 58px;
    height: 58px;
    border-radius: 50%;
    background: #feff00;
    mix-blend-mode: multiply;
}

.pointer {
    position: absolute;
    left: 49px;
    top: 401px;
    width: 16px;
    height: 26px;
}

/* Input method */
.ime-bar {
    position: absolute;
    right: 0;
    bottom: 207px;
    height: 29px;
    display: flex;
    align-items: center;
    gap: 7px;
    padding-right: 5px;
    background: #fdfeff;
    box-shadow: 0 0 2px #c5cbd2;
}

.ime-bar .ime-logo {
    width: 36px;
    height: 36px;
    margin: -5px 0 0 -2px;
}

.ime-bar button {
    width: 20px;
    height: 20px;
}

.ime-bar button svg {
    display: block;
    width: 19px;
    height: 19px;
    fill: #2e76c5;
}

.ime-bar svg.muted {
    fill: #b9bec4;
}

.ime-bar .lang {
    width: 23px;
    padding-right: 3px;
    font-size: 18px;
    font-weight: bold;
    color: #2e76c5;
}

.ime-float {
    position: absolute;
    right: 102px;
    bottom: 50px;
    width: 63px;
    height: 27px;
    display: flex;
    align-items: center;
    gap: 12px;
    padding-left: 15px;
    background: #fff;
}

.ime-float .ime-logo {
    width: 21px;
    height: 21px;
}

.ime-more {
    width: 10px;
    height: 14px;
}
```
